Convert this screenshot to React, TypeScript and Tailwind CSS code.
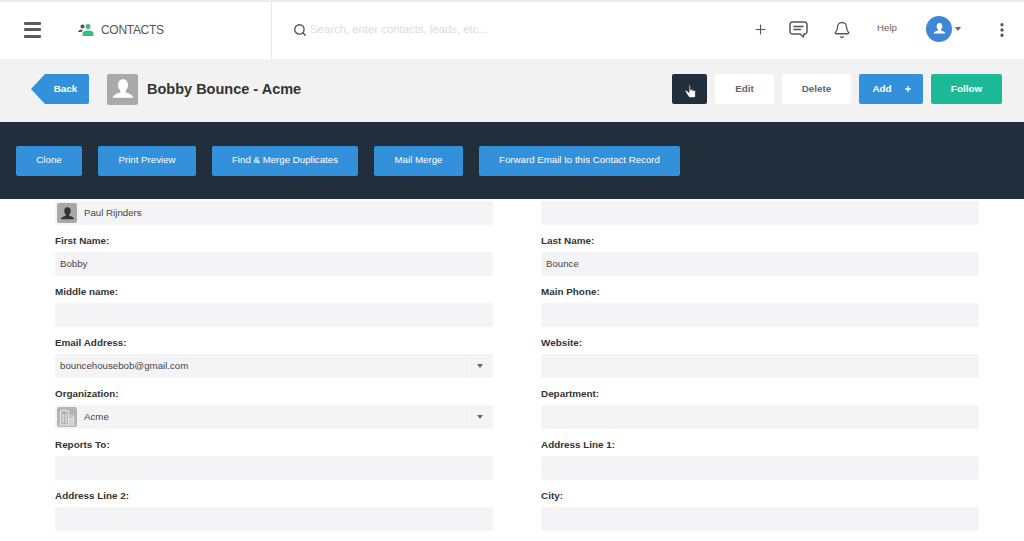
import { Plus, Search, Bell, MoreVertical } from 'lucide-react'

const leftFields = [
  { label: 'First Name:', value: 'Bobby' },
  { label: 'Middle name:' },
  { label: 'Email Address:', value: 'bouncehousebob@gmail.com', select: true },
  { label: 'Organization:', value: 'Acme', select: true, org: true },
  { label: 'Reports To:' },
  { label: 'Address Line 2:' },
]

const rightFields = [
  { label: 'Last Name:', value: 'Bounce' },
  { label: 'Main Phone:' },
  { label: 'Website:' },
  { label: 'Department:' },
  { label: 'Address Line 1:' },
  { label: 'City:' },
]

const actions = [
  { label: 'Clone', width: 'w-[66px]' },
  { label: 'Print Preview', width: 'w-[98px]' },
  { label: 'Find & Merge Duplicates', width: 'w-[146px]' },
  { label: 'Mail Merge', width: 'w-[89px]' },
  { label: 'Forward Email to this Contact Record', width: 'w-[201px]' },
]

function PersonGlyph({ className }: { className: string }) {
  return (
    <svg viewBox="0 0 24 24" className={className} fill="currentColor">
      <path d="M12 3c-3 0-4.600 2.300-4.600 5.200 0 2.100.8 4 2.100 5.200v1.800c-2.800 1-6.500 2-7 4.800h19c-.5-2.800-4.200-3.800-7-4.800v-1.800c1.300-1.200 2.100-3.100 2.100-5.200C16.600 5.300 15 3 12 3z" />
    </svg>
  )
}

function OrgGlyph() {
  return (
    <svg viewBox="0 0 20 20" className="h-[20px] w-[20px]" fill="none" stroke="#e4e4e4" strokeWidth="1.200">
      <path d="M3.500 18V4.500L7 3l4.500 1.500V18" />
      <path d="M11.500 9h5v9" />
      <path d="M6 7v9M9 7v9M13 11.500v4.500h2v-4.500z" />
      <path d="M2.500 18h15" />
    </svg>
  )
}

function CommentGlyph() {
  return (
    <svg viewBox="0 0 19 17" className="h-[17px] w-[19px]" fill="none" stroke="#555" strokeWidth="1.500" strokeLinejoin="round" strokeLinecap="round">
      <path d="M3.500 1h12a2.500 2.500 0 0 1 2.500 2.500v7a2.500 2.500 0 0 1-2.500 2.500H15l-.5 3-3.500-3H3.500A2.500 2.500 0 0 1 1 10.500v-7A2.500 2.500 0 0 1 3.500 1z" />
      <path d="M5 5.500h9M5 8.500h6.500" />
    </svg>
  )
}

function Field({ value, select, org, person }: { value?: string; select?: boolean; org?: boolean; person?: boolean }) {
  return (
    <div className="flex h-[24px] items-center rounded-[2px] bg-[#f4f4f6] text-[9.700px] text-[#444]">
      {person && (
        <div className="ml-[2px] flex h-[20px] w-[20px] items-center justify-center overflow-hidden rounded-[2px] bg-[#a8a8a8] text-[#333]">
          <PersonGlyph className="h-[17px] w-[17px]" />
        </div>
      )}
      {org && (
        <div className="ml-[2px] flex h-[20px] w-[20px] items-center justify-center rounded-[2px] bg-[#b4b4b4]">
          <OrgGlyph />
        </div>
      )}
      {value && <span className={org || person ? 'ml-[7px]' : 'ml-[5px]'}>{value}</span>}
      {select && (
        <div className="ml-auto flex h-full w-[27px] items-center justify-center border-l border-[#eeeeef] pr-[1px]">
          <div className="h-0 w-0 border-x-[3.500px] border-t-[4px] border-x-transparent border-t-[#666]" />
        </div>
      )}
    </div>
  )
}

function FormColumn({ first, fields }: { first?: string; fields: { label: string; value?: string; select?: boolean; org?: boolean }[] }) {
  return (
    <div className="flex flex-col">
      <Field value={first} person={!!first} />
      {fields.map((f) => (
        <div key={f.label}>
          <div className="pb-[5px] pt-[10px] text-[9.900px] font-bold leading-[12px] text-[#333]">{f.label}</div>
          <Field value={f.value} select={f.select} org={f.org} />
        </div>
      ))}
    </div>
  )
}

export default function App() {
  return (
    <div className="flex h-[541px] w-[1024px] flex-col overflow-hidden bg-white font-['Liberation_Sans',Arial,sans-serif]">
      {/* Top nav */}
      <header className="flex h-[59px] shrink-0 items-stretch border-t-2 border-[#ececec]">
        <div className="flex w-[272px] shrink-0 items-center border-r border-[#e8e8e8] pb-[2px]">
          <div className="ml-[24px] flex w-[17px] flex-col gap-[3.500px]">
            <span className="h-[3px] rounded-[1px] bg-[#5c5c5c]" />
            <span className="h-[3px] rounded-[1px] bg-[#5c5c5c]" />
            <span className="h-[3px] rounded-[1px] bg-[#5c5c5c]" />
          </div>
          <svg viewBox="0 0 16 12" className="ml-[37px] h-[12px] w-[16px]">
            <circle cx="4.500" cy="2.500" r="2" fill="#555" />
            <path d="M0 8c.5-1.600 2-2.400 4.500-2.400L4 8z" fill="#555" />
            <circle cx="10" cy="2.500" r="2.500" fill="#3dbb79" />
            <path d="M4.500 12V9.500c0-2 2-3 5.500-3s5.500 1 5.500 3V12z" fill="#3dbb79" />
          </svg>
          <span className="ml-[7px] text-[12px] tracking-[-0.3px] text-[#555]">CONTACTS</span>
        </div>
        <div className="flex flex-1 items-center pb-[2px]">
          <Search className="ml-[21px] h-[14px] w-[14px] text-[#555]" strokeWidth={2.400} />
          <span className="ml-[3px] text-[11.350px] text-[#dcdcdc]">Search, enter contacts, leads, etc...</span>
          <Plus className="ml-auto h-[15px] w-[15px] text-[#555]" strokeWidth={1.800} />
          <div className="ml-[21px]">
            <CommentGlyph />
          </div>
          <Bell className="ml-[25px] h-[18px] w-[18px] text-[#555]" strokeWidth={1.700} />
          <span className="ml-[26px] -translate-y-[1px] text-[9.700px] text-[#666]">Help</span>
          <div className="ml-[29px] flex h-[26px] w-[26px] -translate-y-[1px] items-center justify-center rounded-full bg-[#3f86d8] text-white">
            <PersonGlyph className="h-[15px] w-[15px]" />
          </div>
          <div className="ml-[3px] h-0 w-0 -translate-y-[1px] border-x-[3.500px] border-t-[4px] border-x-transparent border-t-[#666]" />
          <MoreVertical className="ml-[32px] mr-[13px] h-[18px] w-[18px] text-[#555]" strokeWidth={2.400} />
        </div>
      </header>

      {/* Record header */}
      <div className="flex h-[63px] shrink-0 items-center bg-[#f2f2f2] pb-[3px]">
        <div className="ml-[31px] flex h-[30px] w-[58px] items-center justify-center rounded-r-[2px] bg-[#3391dc] pl-[11px] text-[9.900px] font-bold text-white [clip-path:polygon(0_50%,14px_0,100%_0,100%_100%,14px_100%)]">
          Back
        </div>
        <div className="ml-[18px] flex h-[31px] w-[31px] items-center justify-center rounded-[2px] bg-[#a9a9a9] text-white">
          <PersonGlyph className="h-[26px] w-[26px]" />
        </div>
        <h1 className="ml-[9px] translate-y-[1px] text-[14.500px] font-bold text-[#333]">Bobby Bounce - Acme</h1>

        <div className="ml-auto mr-[22px] flex gap-[8px] text-[9.900px] font-bold">
          <div className="relative h-[30px] w-[35px] rounded-[2px] bg-[#212e3b]">
            <svg viewBox="0 0 24 24" className="absolute left-[11px] top-[9px] h-[16px] w-[16px]" fill="#fff" stroke="#333" strokeWidth="1.500" strokeLinejoin="round">
              <path d="M9 4c0-1.500 2.500-1.500 2.500 0v6c0-1.300 2.500-1.300 2.500 0v1c0-1.200 2.500-1.200 2.500 0v1c0-1.100 2.500-1.100 2.500.5V18c0 2-1 4-3 4h-5c-2 0-3-2-4.500-4L3.500 13c-1-1.500 1-3 2.500-1.500L9 14z" />
            </svg>
          </div>
          <div className="flex h-[30px] w-[59px] items-center justify-center rounded-[2px] bg-white text-[#666]">Edit</div>
          <div className="flex h-[30px] w-[69px] items-center justify-center rounded-[2px] bg-white text-[#666]">Delete</div>
          <div className="flex h-[30px] w-[64px] items-center justify-center gap-[12px] rounded-[2px] bg-[#3391dc] pl-[2px] text-white">
            Add
            <Plus className="h-[8px] w-[8px]" strokeWidth={4} />
          </div>
          <div className="flex h-[30px] w-[71px] items-center justify-center rounded-[2px] bg-[#1cb997] text-white">Follow</div>
        </div>
      </div>

      {/* Action bar */}
      <div className="flex h-[77px] shrink-0 items-center gap-[16px] bg-[#212e3b] pl-[16px]">
        {actions.map((a) => (
          <div key={a.label} className={`flex h-[30px] items-center justify-center rounded-[2px] bg-[#3391dc] text-[9.700px] text-white ${a.width}`}>
            {a.label}
          </div>
        ))}
      </div>

      {/* Form */}
      <div className="grid grid-cols-2 gap-x-[48px] pl-[55px] pr-[45px] pt-[2px]">
        <FormColumn first="Paul Rijnders" fields={leftFields} />
        <FormColumn fields={rightFields} />
      </div>
    </div>
  )
}
